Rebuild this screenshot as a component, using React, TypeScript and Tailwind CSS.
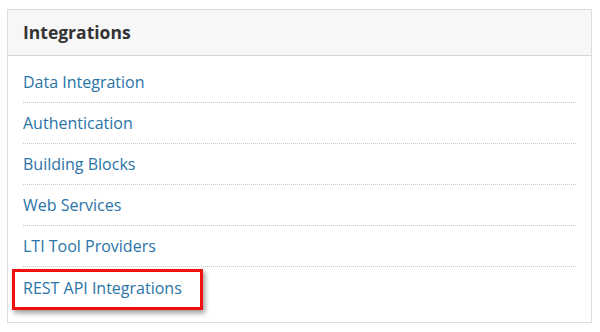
const links = [
  'Data Integration',
  'Authentication',
  'Building Blocks',
  'Web Services',
  'LTI Tool Providers',
  'REST API Integrations',
];

export default function App() {
  return (
    <div className="w-[600px] h-[332px] bg-white pt-[9px] pl-[7px] font-['Open_Sans',sans-serif]">
      <div className="w-[585px] h-[314px] border border-[#dddddd] bg-white">
        {/* header */}
        <div className="h-[46px] bg-[#f7f7f7] border-b border-[#d6d6d6] flex items-center px-[15px]">
          <h2 className="text-[17.5px] font-bold text-[#333333]">Integrations</h2>
        </div>

        {/* link list */}
        <ul className="px-[15px] pt-[6px]">
          {links.map((label, i) => (
            <li
              key={label}
              className={
                i < links.length - 1
                  ? 'relative h-[41px] flex items-center border-b border-dotted border-[#c8c8c8]'
                  : 'relative h-[41px] flex items-center'
              }
            >
              <a href="#" className="text-[16px] text-[#2a74a8]">
                {label}
              </a>
              {label === 'REST API Integrations' && (
                <span className="absolute left-[-11px] top-[2px] w-[191px] h-[41px] border-[3px] border-[#f01010] shadow-[2px_3px_5px_rgba(0,0,0,0.4)]" />
              )}
            </li>
          ))}
        </ul>
      </div>
    </div>
  );
}
